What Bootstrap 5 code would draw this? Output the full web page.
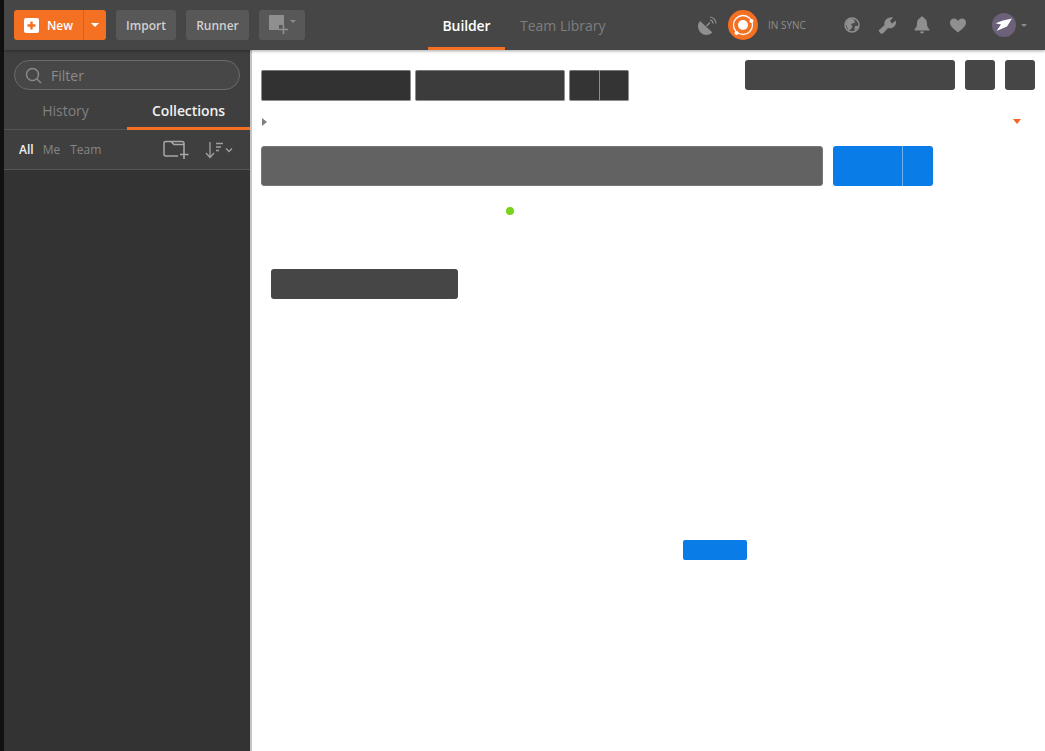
<!DOCTYPE html>
<html>
<head>
  <title>Postman</title>
  <link rel="stylesheet" href="https://cdn.jsdelivr.net/npm/bootstrap@5.3.3/dist/css/bootstrap.min.css">
  <style>
    html, body { height: 100%; overflow: hidden; }
    body { background: #000; font-family: "Open Sans", "Liberation Sans", sans-serif; }
    .app-shell { height: 751px; padding-left: 4px; background: #111; }
    .top-bar { height: 50px; background: #464646; box-shadow: 0 1px 3px rgba(0,0,0,.35); z-index: 5; padding: 0 10px; position: relative; }
    .tb-btn { height: 30px; background: #585858; color: #d0d0d0; border-radius: 3px; font-size: 12px; font-weight: 600; display: flex; align-items: center; justify-content: center; padding-top: 1px; }
    .new-btn { width: 92px; background: #f47023; color: #fff; padding-top: 0; }
    .new-main { width: 70px; height: 30px; border-right: 1px solid #d9601c; gap: 8px; padding-top: 1px; }
    .new-plus { width: 15px; height: 15px; display: block; }
    .caret-w { width: 0; height: 0; border-left: 4px solid transparent; border-right: 4px solid transparent; border-top: 4px solid #fff; margin: 0 auto; }
    .caret-g { width: 0; height: 0; border-left: 3.5px solid transparent; border-right: 3.5px solid transparent; border-top: 3.5px solid #8a8a8a; }
    .tile-btn { width: 46px; justify-content: flex-start; padding: 0 0 0 10px; gap: 1px; }
    .builder-nav { position: absolute; left: 424px; top: 0; height: 50px; }
    .nav-tab { height: 50px; font-size: 14px; font-weight: 600; color: #7e7e7e; display: flex; align-items: center; justify-content: center; }
    .nav-tab.on { width: 77px; color: #fff; border-bottom: 3px solid #f47023; padding-top: 3px; letter-spacing: -.1px; }
    .nav-tab.off { margin-left: 15px; font-weight: 400; padding-top: 1px; }
    .right-tools { position: absolute; left: 693px; top: 0; height: 50px; }
    .sync-txt { font-size: 10px; color: #8f8f8f; margin-left: 10px; width: 38px; white-space: nowrap; }
    .side-pane { width: 246px; background: #333; flex: none; }
    .side-head { background: #3f3f3f; height: 120px; padding-top: 10px; border-bottom: 1px solid #555; }
    .filter-box { margin: 0 10px; height: 30px; border: 1px solid #6b6b6b; border-radius: 15px; background: #474747; color: #8a8a8a; font-size: 14px; padding-left: 10px; gap: 9px; }
    .side-tabs { height: 40px; border-bottom: 1px solid #555; font-size: 14px; }
    .side-tab { width: 123px; color: #808080; display: flex; align-items: center; justify-content: center; height: 40px; }
    .side-tab.on { color: #f0f0f0; font-weight: 600; border-bottom: 3px solid #f47023; padding-top: 3px; letter-spacing: -.1px; }
    .scope-row { height: 39px; padding: 0 15px; font-size: 12px; color: #868686; }
    .scope-row b { color: #f0f0f0; font-weight: 600; margin-right: 9px; }
    .scope-row span { margin-right: 10px; }
    .main-pane { flex: 1; background: #fff; border-left: 2px solid #c4c4c4; padding-left: 9px; position: relative; }
    .req-top { height: 51px; }
    .req-tab { height: 31px; margin-top: 20px; background: #363636; border: 1px solid #8e8e8e; border-top-color: #777; border-radius: 2px; }
    .req-tab.t1 { width: 150px; margin-right: 4px; background: #323232; }
    .req-tab.t2 { width: 150px; margin-right: 4px; background: #3c3c3c; }
    .req-tab.t3 { width: 31px; background: #343434; border-radius: 2px 0 0 2px; }
    .req-tab.t4 { width: 29px; background: #343434; border-radius: 0 2px 2px 0; border-left: 0; }
    .env-box { height: 30px; margin-top: 10px; background: #464646; border-radius: 3px; }
    .env-wide { width: 210px; margin-right: 10px; }
    .env-sq { width: 30px; margin-right: 10px; }
    .env-group { margin-left: auto; }
    .meta-row { height: 45px; padding: 0 24px 4px 0; }
    .arr-r { width: 0; height: 0; border-top: 4px solid transparent; border-bottom: 4px solid transparent; border-left: 5px solid #808080; margin-left: 1px; }
    .arr-o { width: 0; height: 0; border-left: 4px solid transparent; border-right: 4px solid transparent; border-top: 5px solid #f26522; }
    .url-row { gap: 10px; }
    .url-box { width: 562px; height: 40px; background: #626262; border: 1px solid #777; border-radius: 3px; }
    .send-btn { width: 100px; height: 40px; background: #0a7ce8; border-radius: 3px; }
    .send-main { width: 70px; height: 40px; border-right: 1px solid #6fb1ee; }
    .status-dot { width: 8px; height: 8px; background: #79d21c; border-radius: 50%; margin: 21px 0 0 245px; }
    .code-chip { width: 187px; height: 30px; background: #464646; border-radius: 3px; margin: 54px 0 0 10px; }
    .blue-chip { width: 64px; height: 20px; background: #0a7ce8; border-radius: 2px; margin: 241px 0 0 422px; }
  </style>
</head>
<body>
  <div class="app-shell d-flex flex-column">
    <div class="top-bar d-flex align-items-center flex-shrink-0 gap-2">
      <div class="tb-btn new-btn" style="margin-right:2px">
        <div class="new-main d-flex align-items-center justify-content-center">
          <svg class="new-plus" viewBox="0 0 15 15"><rect width="15" height="15" rx="2" fill="#fff"/><path d="M7.5 3.5v8M3.5 7.5h8" stroke="#f47023" stroke-width="2.4"/></svg>
          <span>New</span>
        </div>
        <div class="flex-grow-1"><div class="caret-w"></div></div>
      </div>
      <div class="tb-btn" style="width:60px;margin-right:2px">Import</div>
      <div class="tb-btn" style="width:63px;margin-right:2px">Runner</div>
      <div class="tb-btn tile-btn">
        <svg width="20" height="20" viewBox="0 0 20 20"><path d="M0 0h15v10h-5v5H0z" fill="#8f8f8f"/><path d="M14.500 10v9M10 14.500h9" stroke="#8f8f8f" stroke-width="1.600"/></svg>
        <div class="caret-g" style="margin-bottom:8px"></div>
      </div>
      <div class="builder-nav d-flex">
        <div class="nav-tab on">Builder</div>
        <div class="nav-tab off">Team Library</div>
      </div>
      <div class="right-tools d-flex align-items-center">
        <svg width="22" height="22" viewBox="0 0 22 22" style="margin-right:9px"><path d="M3 7 15.500 18.500A8.500 8.500 0 0 1 3 7z" fill="#8f8f8f"/><path d="M9.500 12 13 8.500" stroke="#8f8f8f" stroke-width="1.500"/><path d="M13 6A3.500 3.500 0 0 1 16 9.500M13 3A6.500 6.500 0 0 1 19 9.500" fill="none" stroke="#8f8f8f" stroke-width="1.200"/></svg>
        <svg width="30" height="30" viewBox="0 0 30 30"><circle cx="15" cy="15" r="15" fill="#f47023"/><circle cx="15" cy="15" r="9.500" fill="none" stroke="#fff" stroke-width="1.300"/><circle cx="15" cy="15" r="5" fill="#fff"/><circle cx="23.500" cy="11" r="2" fill="#fff"/><circle cx="8.500" cy="23" r="2" fill="#fff"/></svg>
        <div class="sync-txt">IN SYNC</div>
        <svg width="16" height="16" viewBox="0 0 16 16" style="margin-left:38px"><circle cx="8" cy="8" r="7" fill="#4c4c4c" stroke="#8f8f8f" stroke-width="1.500"/><path d="M5 1.500 10 2.500 11 5.500 7 7 8.500 10 5 14 3 10 1.500 6.500zM11 9h3.500l-1.500 3-2.500 1.500z" fill="#8f8f8f"/></svg>
        <svg width="19" height="18" viewBox="0 0 19 18" style="margin-left:18px"><path d="M.5 14.500 6.500 9C5.500 4.500 10 .5 15 1.500L12 5 14 7.500 18 4.500C19 10 14 13.500 10 12L5 17.500H2.500z" fill="#8f8f8f"/></svg>
        <svg width="16" height="18" viewBox="0 0 16 18" style="margin-left:17px"><path d="M8 0.500C9 .5 9.700 1.200 9.700 2 12 2.800 13 5 13 7.500c0 3 1 4.500 2.500 6v1H.5v-1C2 12 3 10.500 3 7.500 3 5 4 2.800 6.300 2 6.300 1.200 7 .5 8 .5zM6 15.500h4a2 2 0 0 1-4 0z" fill="#8f8f8f"/></svg>
        <svg width="16" height="15" viewBox="0 0 16 15" style="margin-left:20px"><path d="M8 14.500C3 10.500 0 8 0 4.500 0 2 2 .5 4 .5c1.700 0 3.200 1 4 2.500C8.800 1.500 10.300.5 12 .5c2 0 4 1.500 4 4 0 3.500-3 6-8 10z" fill="#8f8f8f"/></svg>
        <svg width="24" height="24" viewBox="0 0 24 24" style="margin-left:26px"><circle cx="12" cy="12" r="12" fill="#6d6079"/><path d="M20 5.500 11 7.500 3.500 10.300 9 11.500 4.500 18 15 13.500z" fill="#fff"/></svg>
        <div class="caret-g" style="margin-left:5px"></div>
      </div>
    </div>

    <div class="d-flex flex-grow-1">
      <div class="side-pane">
        <div class="side-head">
          <div class="filter-box d-flex align-items-center">
            <svg width="17" height="17" viewBox="0 0 17 17"><circle cx="7.500" cy="7.500" r="6" fill="none" stroke="#8a8a8a" stroke-width="1.500"/><path d="M12 12l4 4" stroke="#8a8a8a" stroke-width="1.500"/></svg>
            <span>Filter</span>
          </div>
          <div class="side-tabs d-flex">
            <div class="side-tab">History</div>
            <div class="side-tab on">Collections</div>
          </div>
          <div class="scope-row d-flex align-items-center">
            <b>All</b><span>Me</span><span>Team</span>
            <svg class="ms-auto" width="26" height="19" viewBox="0 0 26 19" style="margin-right:16px"><path d="M21 10V3.500Q21 1.500 19 1.500H8L11 4.500H21M1 3V14Q1 16 3 16H15M1 3Q1 1.500 3 1.500H8" fill="none" stroke="#a8a8a8" stroke-width="1.500"/><path d="M21 10v9M17 14.500h8.500" stroke="#a8a8a8" stroke-width="1.600"/></svg>
            <svg width="28" height="18" viewBox="0 0 28 18" style="margin-right:2px"><path d="M5 1v15M1 12l4 4.500L9 12" fill="none" stroke="#a0a0a0" stroke-width="1.300"/><path d="M11 2.500h7M11 6h5M11 9.500h3" stroke="#a0a0a0" stroke-width="1.600"/><path d="M21 7.500l3 3 3-3" fill="none" stroke="#a0a0a0" stroke-width="1.300"/></svg>
          </div>
        </div>
      </div>

      <div class="main-pane">
        <div class="req-top d-flex align-items-start">
          <div class="req-tab t1"></div>
          <div class="req-tab t2"></div>
          <div class="req-tab t3"></div>
          <div class="req-tab t4"></div>
          <div class="env-group d-flex">
            <div class="env-box env-wide"></div>
            <div class="env-box env-sq"></div>
            <div class="env-box env-sq"></div>
          </div>
        </div>
        <div class="meta-row d-flex align-items-center justify-content-between">
          <div class="arr-r"></div>
          <div class="arr-o"></div>
        </div>
        <div class="url-row d-flex">
          <div class="url-box"></div>
          <div class="send-btn d-flex"><div class="send-main"></div></div>
        </div>
        <div class="status-dot"></div>
        <div class="code-chip"></div>
        <div class="blue-chip"></div>
      </div>
    </div>
  </div>
  <script src="https://cdn.jsdelivr.net/npm/bootstrap@5.3.3/dist/js/bootstrap.bundle.min.js"></script>
</body>
</html>
